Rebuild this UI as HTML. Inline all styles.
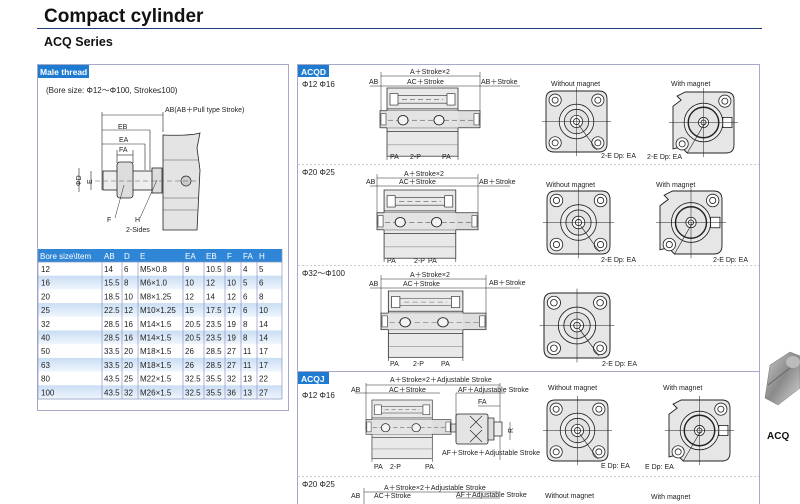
<!DOCTYPE html>
<html><head><meta charset="utf-8"><style>
html,body{margin:0;padding:0;background:#fff;}
body{width:800px;height:504px;overflow:hidden;position:relative;font-family:"Liberation Sans",sans-serif;}
svg{position:absolute;left:0;top:0;}
text{font-family:"Liberation Sans",sans-serif;fill:#222;}
.t{font-size:8px;}
.s{font-size:7px;}
</style></head><body>
<svg width="800" height="504" viewBox="0 0 800 504">
<defs>
<symbol id="side" viewBox="0 0 100 76" preserveAspectRatio="none" overflow="visible">
  <rect x="7" y="0" width="71" height="72" fill="#e9e9e9" stroke="#333" stroke-width="0.8"/>
  <rect x="0" y="24" width="100" height="18" fill="#dedede" stroke="#333" stroke-width="0.8"/>
  <rect x="7" y="24" width="71" height="18" fill="#e4e4e4" stroke="none"/>
  <line x1="7" y1="22" x2="78" y2="22" stroke="#333" stroke-width="0.8"/>
  <line x1="7" y1="46" x2="78" y2="46" stroke="#333" stroke-width="0.8"/>
  <rect x="10" y="6" width="8" height="12" fill="#fff" stroke="#333" stroke-width="0.7"/>
  <rect x="67" y="6" width="8" height="12" fill="#fff" stroke="#333" stroke-width="0.7"/>
  <line x1="18" y1="8" x2="67" y2="8" stroke="#333" stroke-width="0.6"/>
  <line x1="18" y1="16" x2="67" y2="16" stroke="#333" stroke-width="0.6"/>
  <line x1="22" y1="12" x2="63" y2="12" stroke="#333" stroke-width="0.5" stroke-dasharray="5 3"/>
  <line x1="0" y1="34" x2="100" y2="34" stroke="#333" stroke-width="0.5" stroke-dasharray="5 3"/>
  <circle cx="23" cy="34" r="5" fill="#f4f4f4" stroke="#222" stroke-width="0.9"/>
  <circle cx="59" cy="34" r="5" fill="#f4f4f4" stroke="#222" stroke-width="0.9"/>
  <rect x="1" y="27" width="5" height="12" fill="#fff" stroke="#333" stroke-width="0.6"/>
  <rect x="94" y="27" width="5" height="12" fill="#fff" stroke="#333" stroke-width="0.6"/>
  <line x1="7" y1="60" x2="78" y2="60" stroke="#777" stroke-width="0.5"/>
  <line x1="7" y1="72" x2="7" y2="76" stroke="#333" stroke-width="0.6"/>
  <line x1="78" y1="72" x2="78" y2="76" stroke="#333" stroke-width="0.6"/>
</symbol>
<symbol id="endA" viewBox="0 0 60 60" preserveAspectRatio="none" overflow="visible">
  <path d="M8 0 H52 Q60 0 60 8 V52 Q60 60 52 60 H8 Q0 60 0 52 V8 Q0 0 8 0Z" fill="#e6e6e6" stroke="#222" stroke-width="0.9"/>
  <g fill="#fff" stroke="#222" stroke-width="0.8">
  <circle cx="9" cy="9" r="6"/><circle cx="9" cy="9" r="3"/>
  <circle cx="51" cy="9" r="6"/><circle cx="51" cy="9" r="3"/>
  <circle cx="9" cy="51" r="6"/><circle cx="9" cy="51" r="3"/>
  <circle cx="51" cy="51" r="6"/><circle cx="51" cy="51" r="3"/>
  <circle cx="30" cy="30" r="17" fill="#ececec"/>
  <circle cx="30" cy="30" r="12" fill="#e2e2e2"/>
  <circle cx="30" cy="30" r="6"/><circle cx="30" cy="30" r="3"/>
  </g>
  <line x1="-4" y1="30" x2="64" y2="30" stroke="#222" stroke-width="0.5"/>
  <line x1="30" y1="-4" x2="30" y2="64" stroke="#222" stroke-width="0.5"/>
  <line x1="32" y1="33" x2="50" y2="58" stroke="#222" stroke-width="0.6"/>
</symbol>
<symbol id="endB" viewBox="0 0 60 60" preserveAspectRatio="none" overflow="visible">
  <path d="M12 0 H52 Q60 0 60 8 V52 Q60 60 52 60 H14 L8 54 L0 56 V14 L8 8 L4 4 Z" fill="#e6e6e6" stroke="#222" stroke-width="0.9"/>
  <g fill="#fff" stroke="#222" stroke-width="0.8">
  <circle cx="51" cy="9" r="6"/><circle cx="51" cy="9" r="3"/>
  <circle cx="9" cy="51" r="6"/><circle cx="9" cy="51" r="3"/>
  <circle cx="30" cy="30" r="19" fill="#ececec"/>
  <circle cx="30" cy="30" r="15" fill="#e4e4e4" stroke-width="1.4"/>
  <circle cx="30" cy="30" r="5"/><circle cx="30" cy="30" r="2.5"/>
  <rect x="49" y="25" width="9" height="10" fill="#fff"/>
  </g>
  <line x1="-4" y1="30" x2="64" y2="30" stroke="#222" stroke-width="0.5"/>
  <line x1="30" y1="-4" x2="30" y2="64" stroke="#222" stroke-width="0.5"/>
  <line x1="31" y1="31" x2="14" y2="60" stroke="#222" stroke-width="0.6"/>
</symbol>
</defs>

<!-- title -->
<text x="44" y="22" style="font-size:19px;font-weight:bold;fill:#111">Compact cylinder</text>
<line x1="37" y1="28.5" x2="762" y2="28.5" stroke="#1f3d7a" stroke-width="1"/>
<text x="44" y="46" style="font-size:12.5px;font-weight:bold;fill:#111">ACQ Series</text>

<!-- left panel -->
<rect x="37.5" y="64.5" width="251" height="346" fill="#fff" stroke="#a6aac8" stroke-width="1"/>
<rect x="38" y="65" width="51" height="13" fill="#1f7bd0"/>
<text x="40" y="75" style="font-size:8.5px;font-weight:bold;fill:#fff">Male thread</text>
<text x="46" y="93" class="t">(Bore size: Φ12～Φ100, Stroke≤100)</text>
<text x="165" y="112" class="s">AB(AB＋Pull type Stroke)</text>
<g stroke="#222" stroke-width="0.6" fill="none">
<line x1="102" y1="112" x2="102" y2="190"/><line x1="163" y1="112" x2="163" y2="132"/>
<line x1="102" y1="115" x2="163" y2="115"/>
<line x1="102" y1="130" x2="150" y2="130"/><line x1="150" y1="130" x2="150" y2="170"/>
<line x1="102" y1="144" x2="145" y2="144"/><line x1="145" y1="144" x2="145" y2="170"/>
<line x1="117" y1="155" x2="133" y2="155"/><line x1="117" y1="150" x2="117" y2="163"/><line x1="133" y1="150" x2="133" y2="163"/>
<line x1="79" y1="168" x2="79" y2="192"/><line x1="91" y1="171" x2="91" y2="190"/>
</g>
<text x="118" y="129" class="s">EB</text><text x="119" y="142" class="s">EA</text><text x="119" y="152" class="s">FA</text>
<text x="81" y="186" class="s" transform="rotate(-90 81 186)">ΦD</text>
<text x="92" y="184" class="s" transform="rotate(-90 92 184)">E</text>
<path d="M163 135 Q190 136 200 133 L197 148 L200 170 L197 230 L163 230 Z" fill="#e4e4e4" stroke="#222" stroke-width="0.8"/>
<line x1="163" y1="160" x2="198" y2="160" stroke="#555" stroke-width="0.5"/>
<line x1="163" y1="198" x2="198" y2="198" stroke="#555" stroke-width="0.5"/>
<line x1="163" y1="210" x2="198" y2="210" stroke="#555" stroke-width="0.5"/>
<rect x="103" y="171" width="58" height="19" fill="#eee" stroke="#222" stroke-width="0.8"/>
<rect x="117" y="162" width="16" height="36" rx="3" fill="#ddd" stroke="#222" stroke-width="0.8"/>
<rect x="152" y="168" width="10" height="25" fill="#ddd" stroke="#222" stroke-width="0.8"/>
<circle cx="186" cy="181" r="5" fill="#ccc" stroke="#222" stroke-width="0.7"/>
<line x1="95" y1="181" x2="200" y2="181" stroke="#555" stroke-width="0.5" stroke-dasharray="5 3"/>
<line x1="115" y1="218" x2="124" y2="185" stroke="#222" stroke-width="0.5"/>
<line x1="140" y1="218" x2="157" y2="180" stroke="#222" stroke-width="0.5"/>
<text x="107" y="222" class="s">F</text><text x="135" y="222" class="s">H</text><text x="126" y="232" class="s">2-Sides</text>

<!-- table -->
<g>
<rect x="38" y="249" width="244" height="13" fill="#2f86d6"/>
<g style="font-size:8px">
<text x="40" y="259" style="fill:#fff">Bore size\Item</text><text x="104" y="259" style="fill:#fff">AB</text><text x="124" y="259" style="fill:#fff">D</text><text x="140" y="259" style="fill:#fff">E</text><text x="185" y="259" style="fill:#fff">EA</text><text x="206" y="259" style="fill:#fff">EB</text><text x="227" y="259" style="fill:#fff">F</text><text x="243" y="259" style="fill:#fff">FA</text><text x="259" y="259" style="fill:#fff">H</text>
</g>
<defs><linearGradient id="rb" x1="0" y1="0" x2="0" y2="1"><stop offset="0" stop-color="#c9ddf3"/><stop offset="1" stop-color="#f0f6fd"/></linearGradient></defs>
<rect x="38" y="275.7" width="244" height="13.7" fill="url(#rb)"/>
<rect x="38" y="303.1" width="244" height="13.7" fill="url(#rb)"/>
<rect x="38" y="330.5" width="244" height="13.7" fill="url(#rb)"/>
<rect x="38" y="357.9" width="244" height="13.7" fill="url(#rb)"/>
<rect x="38" y="385.3" width="244" height="13.7" fill="url(#rb)"/>
<g stroke="#8a96c0" stroke-width="0.7">
<line x1="38" y1="262" x2="282" y2="262"/><line x1="38" y1="399" x2="282" y2="399"/>
<line x1="38" y1="249" x2="38" y2="399"/><line x1="282" y1="249" x2="282" y2="399"/>
<line x1="102" y1="262" x2="102" y2="399"/><line x1="122" y1="262" x2="122" y2="399"/><line x1="138" y1="262" x2="138" y2="399"/><line x1="183" y1="262" x2="183" y2="399"/><line x1="204" y1="262" x2="204" y2="399"/><line x1="225" y1="262" x2="225" y2="399"/><line x1="241" y1="262" x2="241" y2="399"/><line x1="257" y1="262" x2="257" y2="399"/>
</g>
<g style="font-size:8px">
<text x="41" y="272">12</text><text x="104" y="272">14</text><text x="124" y="272">6</text><text x="140" y="272">M5×0.8</text><text x="185" y="272">9</text><text x="206" y="272">10.5</text><text x="227" y="272">8</text><text x="243" y="272">4</text><text x="259" y="272">5</text>
<text x="41" y="285.7">16</text><text x="104" y="285.7">15.5</text><text x="124" y="285.7">8</text><text x="140" y="285.7">M6×1.0</text><text x="185" y="285.7">10</text><text x="206" y="285.7">12</text><text x="227" y="285.7">10</text><text x="243" y="285.7">5</text><text x="259" y="285.7">6</text>
<text x="41" y="299.4">20</text><text x="104" y="299.4">18.5</text><text x="124" y="299.4">10</text><text x="140" y="299.4">M8×1.25</text><text x="185" y="299.4">12</text><text x="206" y="299.4">14</text><text x="227" y="299.4">12</text><text x="243" y="299.4">6</text><text x="259" y="299.4">8</text>
<text x="41" y="313.1">25</text><text x="104" y="313.1">22.5</text><text x="124" y="313.1">12</text><text x="140" y="313.1">M10×1.25</text><text x="185" y="313.1">15</text><text x="206" y="313.1">17.5</text><text x="227" y="313.1">17</text><text x="243" y="313.1">6</text><text x="259" y="313.1">10</text>
<text x="41" y="326.8">32</text><text x="104" y="326.8">28.5</text><text x="124" y="326.8">16</text><text x="140" y="326.8">M14×1.5</text><text x="185" y="326.8">20.5</text><text x="206" y="326.8">23.5</text><text x="227" y="326.8">19</text><text x="243" y="326.8">8</text><text x="259" y="326.8">14</text>
<text x="41" y="340.5">40</text><text x="104" y="340.5">28.5</text><text x="124" y="340.5">16</text><text x="140" y="340.5">M14×1.5</text><text x="185" y="340.5">20.5</text><text x="206" y="340.5">23.5</text><text x="227" y="340.5">19</text><text x="243" y="340.5">8</text><text x="259" y="340.5">14</text>
<text x="41" y="354.2">50</text><text x="104" y="354.2">33.5</text><text x="124" y="354.2">20</text><text x="140" y="354.2">M18×1.5</text><text x="185" y="354.2">26</text><text x="206" y="354.2">28.5</text><text x="227" y="354.2">27</text><text x="243" y="354.2">11</text><text x="259" y="354.2">17</text>
<text x="41" y="367.9">63</text><text x="104" y="367.9">33.5</text><text x="124" y="367.9">20</text><text x="140" y="367.9">M18×1.5</text><text x="185" y="367.9">26</text><text x="206" y="367.9">28.5</text><text x="227" y="367.9">27</text><text x="243" y="367.9">11</text><text x="259" y="367.9">17</text>
<text x="41" y="381.6">80</text><text x="104" y="381.6">43.5</text><text x="124" y="381.6">25</text><text x="140" y="381.6">M22×1.5</text><text x="185" y="381.6">32.5</text><text x="206" y="381.6">35.5</text><text x="227" y="381.6">32</text><text x="243" y="381.6">13</text><text x="259" y="381.6">22</text>
<text x="41" y="395.3">100</text><text x="104" y="395.3">43.5</text><text x="124" y="395.3">32</text><text x="140" y="395.3">M26×1.5</text><text x="185" y="395.3">32.5</text><text x="206" y="395.3">35.5</text><text x="227" y="395.3">36</text><text x="243" y="395.3">13</text><text x="259" y="395.3">27</text>
</g>
</g>

<!-- right panel -->
<rect x="297.5" y="64.5" width="462" height="450" fill="#fff" stroke="#a6aac8" stroke-width="1"/>
<line x1="298" y1="164.5" x2="759" y2="164.5" stroke="#999" stroke-width="0.6" stroke-dasharray="2 2"/>
<line x1="298" y1="265.5" x2="759" y2="265.5" stroke="#999" stroke-width="0.6" stroke-dasharray="2 2"/>
<line x1="298" y1="371.5" x2="759" y2="371.5" stroke="#a6aac8" stroke-width="1"/>
<line x1="298" y1="476.5" x2="759" y2="476.5" stroke="#999" stroke-width="0.6" stroke-dasharray="2 2"/>
<rect x="298" y="65" width="31" height="12" fill="#1f7bd0"/>
<text x="301" y="75" style="font-size:8.5px;font-weight:bold;fill:#fff">ACQD</text>
<rect x="298" y="372" width="31" height="12" fill="#1f7bd0"/>
<text x="301" y="382" style="font-size:8.5px;font-weight:bold;fill:#fff">ACQJ</text>

<!-- row1 -->
<text x="302" y="87" class="t">Φ12  Φ16</text>
<g stroke="#222" stroke-width="0.5"><line x1="381" y1="76" x2="480" y2="76"/><line x1="370" y1="86" x2="520" y2="86"/><line x1="381" y1="72" x2="381" y2="115"/><line x1="480" y1="72" x2="480" y2="115"/></g>
<text x="410" y="74" class="s">A＋Stroke×2</text>
<text x="369" y="84" class="s">AB</text><text x="407" y="84" class="s">AC＋Stroke</text><text x="481" y="84" class="s">AB＋Stroke</text>
<use href="#side" x="380" y="88" width="100" height="72"/>
<text x="390" y="159" class="s">PA</text><text x="410" y="159" class="s">2-P</text><text x="442" y="159" class="s">PA</text>
<text x="551" y="86" class="s">Without magnet</text><text x="671" y="86" class="s">With magnet</text>
<use href="#endA" x="546" y="91" width="61" height="61"/>
<use href="#endB" x="673" y="92" width="61" height="61"/>
<text x="601" y="158" class="s">2-E Dp: EA</text><text x="647" y="159" class="s">2-E Dp: EA</text>

<!-- row2 -->
<text x="302" y="175" class="t">Φ20  Φ25</text>
<g stroke="#222" stroke-width="0.5"><line x1="377" y1="178" x2="478" y2="178"/><line x1="370" y1="186" x2="510" y2="186"/><line x1="377" y1="174" x2="377" y2="215"/><line x1="478" y1="174" x2="478" y2="215"/></g>
<text x="404" y="176" class="s">A＋Stroke×2</text>
<text x="366" y="184" class="s">AB</text><text x="399" y="184" class="s">AC＋Stroke</text><text x="479" y="184" class="s">AB＋Stroke</text>
<use href="#side" x="377" y="190" width="101" height="72"/>
<text x="387" y="263" class="s">PA</text><text x="414" y="263" class="s">2-P</text><text x="428" y="263" class="s">PA</text>
<text x="546" y="187" class="s">Without magnet</text><text x="656" y="187" class="s">With magnet</text>
<use href="#endA" x="547" y="191" width="63" height="63"/>
<use href="#endB" x="660" y="191" width="62" height="63"/>
<text x="601" y="262" class="s">2-E Dp: EA</text><text x="713" y="262" class="s">2-E Dp: EA</text>

<!-- row3 -->
<text x="302" y="276" class="t">Φ32～Φ100</text>
<g stroke="#222" stroke-width="0.5"><line x1="381" y1="279" x2="486" y2="279"/><line x1="370" y1="288" x2="520" y2="288"/><line x1="381" y1="275" x2="381" y2="315"/><line x1="486" y1="275" x2="486" y2="315"/></g>
<text x="410" y="277" class="s">A＋Stroke×2</text>
<text x="369" y="286" class="s">AB</text><text x="403" y="286" class="s">AC＋Stroke</text><text x="489" y="285" class="s">AB＋Stroke</text>
<use href="#side" x="381" y="291" width="105" height="70"/>
<text x="390" y="366" class="s">PA</text><text x="413" y="366" class="s">2-P</text><text x="441" y="366" class="s">PA</text>
<use href="#endA" x="544" y="293" width="66" height="65"/>
<text x="602" y="366" class="s">2-E Dp: EA</text>

<!-- ACQJ row -->
<text x="302" y="398" class="t">Φ12  Φ16</text>
<g stroke="#222" stroke-width="0.5"><line x1="366" y1="385" x2="500" y2="385"/><line x1="355" y1="393" x2="440" y2="393"/><line x1="366" y1="383" x2="366" y2="430"/><line x1="456" y1="393" x2="505" y2="393"/><line x1="456" y1="393" x2="456" y2="420"/><line x1="500" y1="383" x2="500" y2="460"/><line x1="478" y1="406" x2="500" y2="406"/><line x1="510" y1="422" x2="510" y2="440"/></g>
<text x="390" y="382" class="s">A＋Stroke×2＋Adjustable Stroke</text>
<text x="351" y="392" class="s">AB</text><text x="389" y="392" class="s">AC＋Stroke</text><text x="458" y="392" class="s">AF＋Adjustable Stroke</text>
<text x="478" y="404" class="s">FA</text>
<use href="#side" x="366" y="400" width="85" height="62"/>
<rect x="451" y="424" width="10" height="8" fill="#ddd" stroke="#222" stroke-width="0.6"/>
<rect x="456" y="414" width="32" height="30" rx="2" fill="#e4e4e4" stroke="#222" stroke-width="0.8"/>
<path d="M470 416 L482 428 M482 416 L470 428 M470 430 L482 442 M482 430 L470 442" stroke="#222" stroke-width="0.6"/>
<rect x="488" y="418" width="6" height="22" fill="#ddd" stroke="#222" stroke-width="0.7"/>
<rect x="494" y="422" width="8" height="14" fill="#eee" stroke="#222" stroke-width="0.7"/>
<text x="513" y="433" class="s" transform="rotate(-90 513 433)">R</text>
<text x="442" y="455" class="s">AF＋Stroke＋Adjustable Stroke</text>
<text x="374" y="469" class="s">PA</text><text x="390" y="469" class="s">2-P</text><text x="425" y="469" class="s">PA</text>
<text x="548" y="390" class="s">Without magnet</text><text x="663" y="390" class="s">With magnet</text>
<use href="#endA" x="547" y="400" width="61" height="61"/>
<use href="#endB" x="669" y="400" width="61" height="61"/>
<text x="601" y="468" class="s">E Dp: EA</text><text x="645" y="469" class="s">E Dp: EA</text>

<!-- last row -->
<text x="302" y="487" class="t">Φ20  Φ25</text>
<g stroke="#222" stroke-width="0.5"><line x1="364" y1="492" x2="500" y2="492"/><line x1="364" y1="488" x2="364" y2="504"/><line x1="456" y1="498" x2="500" y2="498"/></g>
<text x="384" y="490" class="s">A＋Stroke×2＋Adjustable Stroke</text>
<text x="351" y="498" class="s">AB</text><text x="374" y="498" class="s">AC＋Stroke</text><text x="456" y="497" class="s">AF＋Adjustable Stroke</text>
<text x="545" y="498" class="s">Without magnet</text><text x="651" y="499" class="s">With magnet</text>

<!-- product photo -->
<defs><linearGradient id="mt" x1="0" y1="0" x2="1" y2="1"><stop offset="0" stop-color="#c9c9c9"/><stop offset="0.5" stop-color="#8a8a8a"/><stop offset="1" stop-color="#d8d8d8"/></linearGradient></defs>
<path d="M770 365 L790 352 L800 356 L800 388 L778 405 L765 398 Z" fill="url(#mt)" stroke="#777" stroke-width="0.5"/>
<ellipse cx="793" cy="362" rx="7" ry="6" fill="#bbb"/>
<line x1="768" y1="385" x2="790" y2="368" stroke="#666" stroke-width="1"/>
<text x="767" y="439" style="font-size:10px;font-weight:bold;fill:#111">ACQ</text>
</svg>
</body></html>
